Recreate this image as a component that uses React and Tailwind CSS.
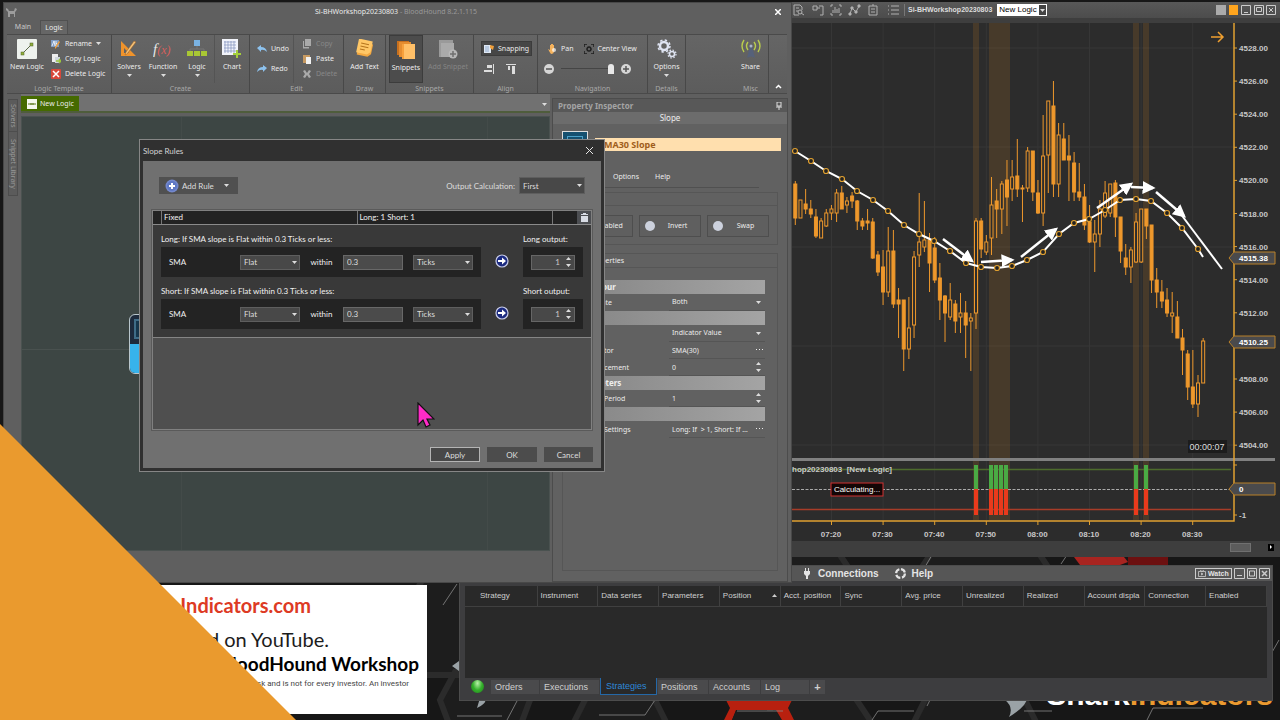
import { useState } from "react";

// one row per minute: high, low, body top, body bottom, hollow
const CANDLES = [
  [181, 225, 184, 218, 0], [200, 218, 200, 218, 1], [189, 214, 204, 209, 0], [200, 218, 209, 214, 0],
  [209, 238, 217, 236, 0], [218, 238, 221, 238, 1], [209, 227, 213, 226, 1], [205, 220, 209, 213, 1],
  [189, 222, 193, 213, 1], [186, 209, 193, 209, 0], [197, 213, 201, 205, 1], [192, 208, 196, 201, 0],
  [200, 230, 201, 221, 0], [218, 230, 221, 226, 0], [209, 230, 221, 223, 0], [218, 259, 222, 258, 0],
  [251, 276, 255, 272, 0], [250, 305, 267, 292, 0], [227, 297, 251, 292, 1], [230, 308, 251, 304, 0],
  [288, 338, 300, 304, 0], [300, 371, 300, 349, 0], [297, 359, 328, 349, 1], [251, 338, 257, 325, 1],
  [193, 267, 242, 255, 1], [201, 252, 240, 247, 1], [233, 292, 240, 263, 0], [237, 283, 248, 280, 0],
  [263, 320, 278, 300, 0], [295, 342, 296, 313, 0], [283, 320, 300, 317, 1], [300, 333, 304, 321, 0],
  [293, 333, 313, 317, 1], [301, 358, 313, 325, 0], [313, 371, 318, 321, 1], [218, 329, 221, 313, 1],
  [218, 258, 221, 249, 0], [235, 255, 242, 252, 1], [177, 255, 205, 238, 1], [189, 238, 201, 209, 0],
  [181, 234, 184, 209, 1], [160, 226, 180, 197, 0], [160, 201, 177, 189, 1], [139, 197, 176, 189, 0],
  [185, 222, 188, 189, 0], [147, 192, 151, 188, 1], [151, 201, 151, 192, 0], [180, 214, 193, 213, 0],
  [115, 226, 156, 213, 1], [101, 193, 101, 155, 1], [81, 197, 106, 184, 0], [123, 197, 135, 184, 1],
  [123, 160, 139, 160, 0], [135, 201, 156, 160, 0], [152, 201, 163, 192, 0], [163, 201, 192, 197, 0],
  [184, 230, 197, 225, 0], [205, 243, 222, 242, 0], [220, 272, 234, 242, 1], [200, 247, 209, 234, 1],
  [181, 218, 193, 216, 1], [184, 217, 184, 213, 1], [180, 237, 183, 217, 0], [217, 263, 217, 251, 0],
  [244, 275, 258, 267, 0], [247, 283, 250, 267, 1], [213, 263, 222, 262, 1], [209, 263, 209, 262, 1],
  [209, 239, 209, 226, 0], [225, 293, 225, 280, 0], [268, 308, 280, 292, 0], [280, 308, 292, 301, 0],
  [288, 317, 300, 313, 0], [292, 333, 313, 316, 1], [301, 338, 317, 338, 0], [329, 375, 338, 350, 0],
  [350, 400, 354, 387, 0], [350, 408, 387, 404, 0], [375, 417, 383, 404, 1], [338, 383, 341, 383, 1],
];

const SMA = [
  [795, 151], [811, 161], [826, 171], [842, 179], [857, 191], [873, 200], [888, 211], [904, 225],
  [919, 234], [934, 241], [950, 251], [966, 263], [981, 267], [997, 268], [1012, 266], [1027, 260],
  [1043, 252], [1059, 234], [1074, 223], [1089, 219], [1105, 210], [1120, 200], [1136, 199], [1151, 201],
  [1167, 213], [1182, 228], [1198, 249],
];

const ARROWS = [
  [943, 239, 972, 261], [981, 262, 1012, 260], [1021, 257, 1056, 229],
  [1097, 208, 1131, 184], [1131, 187, 1153, 188], [1156, 192, 1184, 216],
];

const LAST_PRICE = 4510.25;
const PRICES = [4528, 4526, 4524, 4522, 4520, 4518, 4516, 4514, 4512, 4510, 4508, 4506, 4504];
const TIMES = ["07:20", "07:30", "07:40", "07:50", "08:00", "08:10", "08:20", "08:30"];
const SIGNALS = [976, 991, 996, 1001, 1006, 1136, 1146];

const COLUMNS = [
  "Strategy", "Instrument", "Data series", "Parameters", "Position", "Acct. position", "Sync",
  "Avg. price", "Unrealized", "Realized", "Account displa", "Connection", "Enabled",
];

function Caret({ className = "" }) {
  return (
    <svg className={`w-[5px] h-[3px] shrink-0 pointer-events-none ${className}`} viewBox="0 0 5 3" fill="#ddd">
      <path d="M0 0h5L2.5 3z" />
    </svg>
  );
}

function UpDown({ className = "" }) {
  return (
    <svg className={`w-[5px] h-[10px] shrink-0 ${className}`} viewBox="0 0 5 10" fill="#ddd">
      <path d="M0 3h5L2.5 0zM0 7h5L2.5 10z" />
    </svg>
  );
}

/* ---------- ribbon ---------- */

function Group({ label, className, children }) {
  return (
    <section className={`flex flex-col shrink-0 border-r border-[#484848] ${className}`}>
      <div className="flex h-12 shrink-0">{children}</div>
      <div className="text-center text-[#a8a8a8] leading-3">{label}</div>
    </section>
  );
}

function BigButton({ icon, label, caret, className = "" }) {
  return (
    <button type="button" className={`flex flex-col items-center pt-1 h-12 whitespace-nowrap ${className}`}>
      <svg className="w-5 h-5 shrink-0" viewBox="0 0 20 20">{icon}</svg>
      <span className="mt-[3px] leading-[10px]">{label}</span>
      {caret && <Caret className="mt-[2px]" />}
    </button>
  );
}

function SmallButton({ icon, label, caret, className = "" }) {
  return (
    <button type="button" className={`flex items-center gap-1 h-[15px] whitespace-nowrap ${className}`}>
      <svg className="w-[10px] h-[10px] shrink-0" viewBox="0 0 10 10">{icon}</svg>
      {label}
      {caret && <Caret />}
    </button>
  );
}

const icons = {
  newLogic: (
    <>
      <rect width="20" height="20" rx="1" fill="#eef2ee" />
      <path d="M6 14l8-8" stroke="#5c6a4a" strokeWidth="1" />
      <rect x="4" y="13" width="3" height="3" fill="#8fae3a" stroke="#50622a" strokeWidth=".5" />
      <rect x="13" y="4" width="3" height="3" fill="#8fae3a" stroke="#50622a" strokeWidth=".5" />
    </>
  ),
  solvers: (
    <>
      <path d="M2 2v15h15zM5 9l5 5H5z" fill="#f0932b" fillRule="evenodd" />
      <path d="M17 3L8 15l-2 1 1-3L15 2z" fill="#f3c178" stroke="#9b5a1c" strokeWidth=".5" />
    </>
  ),
  logic: (
    <>
      <rect x="7" y="1" width="6" height="6" fill="#7ab2e2" />
      <path d="M10 7v3M3 12v-2h14v2" stroke="#777" fill="none" />
      <path d="M0 12h6v5H0zM7 12h6v5H7zM14 12h6v5h-6z" fill="#a9c734" />
    </>
  ),
  chart: (
    <>
      <rect x="0" y="0" width="16" height="16" fill="#f2f4fb" />
      <path d="M2 3h12M2 6h12M2 9h12M2 12h12M3 2v12M6 2v12M9 2v12M12 2v12" stroke="#8391bb" strokeWidth=".7" />
      <path d="M15 11v8M11 15h8" stroke="#a4cf3c" strokeWidth="2" />
    </>
  ),
  note: (
    <g transform="rotate(12 10 10)">
      <path d="M3 4h14v10l-3 3H3z" fill="#f3a840" />
      <path d="M2 1h14v11l-3 3H2z" fill="#ffc766" />
      <path d="M5 5h8M5 8h8M5 11h5" stroke="#b5741c" />
    </g>
  ),
  snippets: (
    <>
      <path d="M1 1h12v14H1z" fill="#c8701e" />
      <path d="M3 2h12v15H3z" fill="#e58d30" />
      <path d="M6 4h13v15H6z" fill="#ffc068" />
      <path d="M6 4h2v15H6z" fill="#f6a03c" />
    </>
  ),
  addSnippet: (
    <>
      <path d="M1 1h14v17H1z" fill="#9a9a9a" />
      <path d="M3 4h13v14H3z" fill="#aaa" />
      <circle cx="15" cy="15" r="4.500" fill="#b8b8b8" />
      <path d="M15 12v6M12 15h6" stroke="#707070" strokeWidth="1.500" />
    </>
  ),
  options: (
    <>
      <circle cx="7" cy="7" r="4" fill="none" stroke="#dfe4f2" strokeWidth="2.500" />
      <circle cx="7" cy="7" r="6" fill="none" stroke="#dfe4f2" strokeWidth="1.500" strokeDasharray="2.360" />
      <circle cx="15" cy="15" r="2.500" fill="none" stroke="#dfe4f2" strokeWidth="1.500" />
      <circle cx="15" cy="15" r="4" fill="none" stroke="#dfe4f2" strokeWidth="1.200" strokeDasharray="1.570" />
    </>
  ),
  share: (
    <>
      <path d="M6 19q4-3 8 0l-3-12H9z" fill="#56617a" />
      <circle cx="10" cy="7" r="1.500" fill="#aab4c8" />
      <path
        d="M7 3q-3 4 0 8M13 3q3 4 0 8M3 1q-4 6 0 12M17 1q4 6 0 12"
        fill="none"
        stroke="#b9cc4c"
        strokeWidth="1.400"
      />
    </>
  ),
  rename: (
    <>
      <path d="M0 1h8v7H0z" fill="#7f9cc4" />
      <path d="M1 7l2-5 1 5M5 2v5q3-1 0-3" stroke="#fff" fill="none" strokeWidth=".8" />
      <path d="M9 3L5 9 4 10V8l4-6z" fill="#f0a03c" />
    </>
  ),
  copyLogic: (
    <>
      <path d="M1 0h6v8H1z" fill="#eee" />
      <path d="M4 3h5v6H4z" fill="#cfd6dc" />
      <path d="M5 7h5M8 5l2 2-2 2" stroke="#9bc53d" fill="none" strokeWidth="1.500" />
    </>
  ),
  deleteLogic: (
    <>
      <rect width="10" height="10" rx="1" fill="#d9473a" />
      <path d="M2 2l6 6M8 2L2 8" stroke="#fff" strokeWidth="1.500" />
    </>
  ),
  undo: <path d="M0 4l4-3v2q5 0 6 5-3-3-6-2v2z" fill="#8dc2ee" />,
  redo: <path d="M10 4L6 1v2Q1 3 0 8q3-3 6-2v2z" fill="#8dc2ee" />,
  copy: <path d="M3 0h6v7H3zM1 2h1v6h5v1.500H1z" fill="#aaa" />,
  paste: (
    <>
      <path d="M1 1h7v8H1z" fill="#c79a62" />
      <path d="M4 3h5v7H4z" fill="#f3f3f3" />
    </>
  ),
  remove: <path d="M1 2l2-1 2 3 2-3 2 1-2 3 2 3-2 1-2-3-2 3-2-1 2-3z" fill="#aaa" />,
  snapping: (
    <>
      <path d="M0 1h7v8H0z" fill="#dfe8f4" />
      <path d="M2 2v6M4 2v6" stroke="#7f9cc4" strokeWidth=".8" />
      <path d="M6 1l4 1-1 4-3-2z" fill="#f0a03c" />
    </>
  ),
  hand: (
    <>
      <path d="M1 5l2 1V1h1v3-4h1v4-4h1v4-3h1v6q0 3-3 3Q3 9 1 5z" fill="#f5b25c" />
      <circle cx="7" cy="6" r="2" fill="#fff" opacity=".7" />
    </>
  ),
  center: (
    <path
      d="M0 3V0h3M7 0h3v3M10 7v3H7M3 10H0V7M5 3a2 2 0 1 0 .01 0"
      fill="none"
      stroke="#1e1e1e"
      strokeWidth="1.500"
    />
  ),
  zoomOut: (
    <>
      <circle cx="5" cy="5" r="5" fill="#d6d6d6" />
      <path d="M2 5h6" stroke="#555" strokeWidth="1.500" />
    </>
  ),
  zoomIn: (
    <>
      <circle cx="5" cy="5" r="5" fill="#d6d6d6" />
      <path d="M2 5h6M5 2v6" stroke="#555" strokeWidth="1.500" />
    </>
  ),
};

function Ribbon() {
  const [zoom, setZoom] = useState(100);

  return (
    <div className="flex h-[60px] ml-[3px] mr-1 border-y border-[#4a4a4a] bg-linear-to-b from-[#656565] to-[#5c5c5c]">
      <Group label="Logic Template" className="w-[105px]">
        <BigButton icon={icons.newLogic} label="New Logic" className="w-10" />
        <div className="pl-1 pt-[1px]">
          <SmallButton icon={icons.rename} label="Rename" caret />
          <SmallButton icon={icons.copyLogic} label="Copy Logic" />
          <SmallButton icon={icons.deleteLogic} label="Delete Logic" />
        </div>
      </Group>

      <Group label="Create" className="w-[138px]">
        <BigButton icon={icons.solvers} label="Solvers" caret className="w-[34px]" />
        <BigButton
          icon={
            <text y="15" fontSize="15" fontStyle="italic" fontFamily="Liberation Serif" fill="#e8e8e8">
              f<tspan fontSize="12" fill="#d8605c">(x)</tspan>
            </text>
          }
          label="Function"
          caret
          className="w-[34px]"
        />
        <BigButton icon={icons.logic} label="Logic" caret className="w-[34px]" />
        <BigButton icon={icons.chart} label="Chart" className="flex-1 border-l border-[#545454]" />
      </Group>

      <Group label="Edit" className="w-[94px]">
        <div className="w-[44px] pl-[7px] pt-[6px] border-r border-[#545454]">
          <SmallButton icon={icons.undo} label="Undo" />
          <SmallButton icon={icons.redo} label="Redo" className="mt-[5px]" />
        </div>
        <div className="pl-2 pt-[1px]">
          <SmallButton icon={icons.copy} label="Copy" className="text-[#888]" />
          <SmallButton icon={icons.paste} label="Paste" />
          <SmallButton icon={icons.remove} label="Delete" className="text-[#888]" />
        </div>
      </Group>

      <Group label="Draw" className="w-[42px]">
        <BigButton icon={icons.note} label="Add Text" className="flex-1" />
      </Group>

      <Group label="Snippets" className="w-[88px]">
        <BigButton icon={icons.snippets} label="Snippets" className="w-[34px] ml-[3px] bg-[#4c4c4c] border border-[#3c3c3c]" />
        <BigButton icon={icons.addSnippet} label="Add Snippet" className="flex-1 text-[#858585]" />
      </Group>

      <Group label="Align" className="w-16">
        <div className="pl-[7px] pt-[6px]">
          <SmallButton icon={icons.snapping} label="Snapping" className="w-[51px] pl-[2px] bg-[#464646] border border-[#3c3c3c]" />
          <div className="flex gap-3 mt-2 pl-[3px]">
            <button type="button" aria-label="Align right">
              <svg className="w-[10px] h-[10px]" viewBox="0 0 10 10" fill="#ddd">
                <path d="M3 1h5v3H3zM0 6h8v2H0zM9 0h1v10H9z" />
              </svg>
            </button>
            <button type="button" aria-label="Align top">
              <svg className="w-[10px] h-[10px]" viewBox="0 0 10 10" fill="#ddd">
                <path d="M0 0h10v1H0zM2 2h2v4H2zM6 2h3v8H6z" />
              </svg>
            </button>
          </div>
        </div>
      </Group>

      <Group label="Navigation" className="w-[110px]">
        <div className="flex-1 pt-[6px]">
          <div className="flex gap-[10px] pl-[9px]">
            <SmallButton icon={icons.hand} label="Pan" />
            <SmallButton icon={icons.center} label="Center View" />
          </div>
          <div className="flex items-center gap-[7px] mt-[5px] pl-[6px]">
            <button type="button" aria-label="Zoom out">
              <svg className="w-[10px] h-[10px]" viewBox="0 0 10 10">{icons.zoomOut}</svg>
            </button>
            <input
              type="range"
              aria-label="Zoom"
              value={zoom}
              onChange={(e) => setZoom(e.target.value)}
              className="w-[53px] h-[15px] appearance-none bg-linear-to-b from-transparent from-45% via-[#454545] to-transparent to-55% [&::-webkit-slider-thumb]:appearance-none [&::-webkit-slider-thumb]:w-[6px] [&::-webkit-slider-thumb]:h-[10px] [&::-webkit-slider-thumb]:rounded-t-full [&::-webkit-slider-thumb]:bg-[#e8e8e8]"
            />
            <button type="button" aria-label="Zoom in">
              <svg className="w-[10px] h-[10px]" viewBox="0 0 10 10">{icons.zoomIn}</svg>
            </button>
          </div>
        </div>
      </Group>

      <Group label="Details" className="w-[38px]">
        <BigButton icon={icons.options} label="Options" caret className="flex-1" />
      </Group>

      <Group label="Misc" className="w-9 ml-auto">
        <BigButton icon={icons.share} label="Share" className="flex-1" />
      </Group>
      <button type="button" aria-label="Collapse ribbon" className="w-[18px] flex items-end justify-center pb-1">
        <svg className="w-[7px] h-[5px]" viewBox="0 0 7 5">
          <path d="M1 4l2.500-2.500L6 4" stroke="#fff" strokeWidth="1.500" fill="none" />
        </svg>
      </button>
    </div>
  );
}

/* ---------- property inspector ---------- */

function Toggle({ label }) {
  return (
    <button type="button" className="flex items-center w-[62px] h-[22px] pl-[5px] border border-[#4e4e4e] bg-[#5f5f5f]">
      <span className="w-[10px] h-[10px] rounded-full bg-[#ccd1dd]" />
      <span className="flex-1 text-center">{label}</span>
    </button>
  );
}

function SectionTitle({ children }) {
  return (
    <h3 className="h-[14px] pl-[3px] bg-linear-to-r from-[#858585] to-[#a4a4a4] text-[8px] leading-[14px] font-bold text-[#eee]">
      {children}
    </h3>
  );
}

function Property({ label, value, end }) {
  return (
    <label className="flex items-center h-[17px] pl-3">
      <span className="w-[85px]">{label}</span>
      <span className="relative flex-1 flex items-center border-b border-[#555]">
        {end === "select" ? (
          <select className="w-full h-4 px-[3px] appearance-none">
            <option>{value}</option>
          </select>
        ) : (
          <input className="w-full h-4 pl-[3px] pr-4 text-ellipsis" defaultValue={value} />
        )}
        {end === "select" && <Caret className="absolute right-1" />}
        {end === "spin" && <UpDown className="absolute right-1" />}
        {end === "more" && (
          <svg className="absolute right-[2px] w-[7px] h-[2px]" viewBox="0 0 7 2" fill="#eee">
            <path d="M0 0h1v1H0zM3 0h1v1H3zM6 0h1v1H6z" />
          </svg>
        )}
      </span>
    </label>
  );
}

function PropertyInspector() {
  return (
    <aside className="w-[236px] shrink-0 border border-[#4c4c4c] bg-[#616161] mt-1">
      <header className="flex items-center justify-between h-[13px] px-[5px] bg-[#585858] text-[8px] font-bold text-[#a4a4a4]">
        Property Inspector
        <svg className="w-[6px] h-2" viewBox="0 0 6 8">
          <path d="M1 0h4v4H1zM0 5h6M3 5v3" stroke="#ddd" fill="none" />
        </svg>
      </header>
      <h2 className="h-3 leading-3 text-center text-[8px] bg-[#6c6c6c]">Slope</h2>

      <div className="flex items-center gap-[7px] mt-[7px] mr-[6px] ml-[9px]">
        <div className="w-[26px] h-[26px] border border-[#ddd] bg-[#155070] p-1 shrink-0">
          <div className="h-full border border-[#4aa0c8]" />
        </div>
        <input
          aria-label="Name"
          defaultValue="SMA30 Slope"
          className="flex-1 min-w-0 h-[13px] pl-1 bg-[#ffdfae] text-[#a05e1c] text-[9px] font-bold"
        />
      </div>

      <nav className="flex gap-4 mt-[14px] ml-[10px] mr-7 pb-1 border-b border-[#505050] leading-3">
        <a href="#general" className="w-[34px]">General</a>
        <a href="#options">Options</a>
        <a href="#help">Help</a>
      </nav>

      <section className="mt-1 mx-[9px] h-[53px] border border-[#565656]">
        <div className="h-[13px] border-b border-[#565656] pl-1 leading-3">Output</div>
        <div className="flex gap-[6px] mt-[9px] pl-[8px]">
          <Toggle label="Enabled" />
          <Toggle label="Invert" />
          <Toggle label="Swap" />
        </div>
      </section>

      <section className="mt-2 mx-[9px] h-[318px] border border-[#565656]">
        <div className="h-[14px] border-b border-[#565656] pl-[27px] leading-[13px]">Properties</div>
        <div className="mt-3 ml-[9px] mr-3">
          <SectionTitle>Behaviour</SectionTitle>
          <Property label="Evaluate" value="Both" end="select" />
          <SectionTitle>Input</SectionTitle>
          <Property label="Type" value="Indicator Value" end="select" />
          <Property label="Indicator" value="SMA(30)" end="more" />
          <Property label="Displacement" value="0" end="spin" />
          <SectionTitle>Parameters</SectionTitle>
          <Property label="Slope Period" value="1" end="spin" />
          <SectionTitle>Rules</SectionTitle>
          <Property label="Slope Settings" value="Long: If  > 1, Short: If > 1" end="more" />
        </div>
      </section>
    </aside>
  );
}

/* ---------- BloodHound window ---------- */

function BloodHound() {
  return (
    <div className="absolute left-[3px] top-[2px] w-[789px] h-[581px] flex flex-col bg-[#5f5f5f] border border-[#484848] text-[7px] leading-[10px] text-[#ececec]">
      <header className="flex items-center h-[17px] pl-[2px] pr-[10px]">
        <svg className="w-[11px] h-[10px]" viewBox="0 0 11 10" fill="#9c9c9c">
          <path d="M0 1l2 1 1 2h5l1-3 2 1-1 2-1 1v5H8V7H4v3H2V5L0 3z" />
        </svg>
        <h1 className="flex-1 text-center pt-[1px]">
          Si-BHWorkshop20230803<span className="text-[#999]"> - BloodHound 8.2.1.115</span>
        </h1>
        <button type="button" aria-label="Close BloodHound">
          <svg className="w-[6px] h-[6px]" viewBox="0 0 6 6">
            <path d="M0 0l6 6M6 0L0 6" stroke="#fff" strokeWidth="1.500" />
          </svg>
        </button>
      </header>

      <nav className="flex h-[14px] pl-[2px] leading-[14px]">
        <a href="#main" className="w-[34px] text-center text-[#c8c8c8]">Main</a>
        <a href="#logic" className="w-[28px] text-center border border-b-0 border-[#505050] bg-[#666]">Logic</a>
      </nav>

      <Ribbon />

      <div className="flex flex-1 min-h-0 pl-1 pr-[3px]">
        <div className="w-[10px] h-[97px] mt-[5px] mr-[3px] flex flex-col border border-[#4d4d4d] bg-[#5b5b5b] text-[#999]">
          <button type="button" className="[writing-mode:vertical-rl] h-8 leading-[8px] border-b border-[#4d4d4d]">Solvers</button>
          <button type="button" className="[writing-mode:vertical-rl] flex-1 leading-[8px]">Snippet Library</button>
        </div>

        <main className="flex-1 min-w-0 flex flex-col mr-[2px]">
          <div className="flex items-end justify-between h-[19px] bg-[#717171] border-b-2 border-[#4f5d3c]">
            <button type="button" className="flex items-center gap-[3px] h-[15px] w-[58px] pl-[6px] bg-[#456a00]">
              <svg className="w-[10px] h-[10px]" viewBox="0 0 10 10">
                <rect width="10" height="10" fill="#f4f7ee" />
                <path d="M1 5h8M4 4v2M6 4v2" stroke="#5c7a1c" fill="none" />
              </svg>
              New Logic
            </button>
            <Caret className="mb-[5px] mr-[3px]" />
          </div>
          <div className="relative mt-[3px] h-[435px] bg-[#3d4644] border border-[#4a5250]">
            <div className="absolute inset-x-0 top-[232px] h-px bg-[#49514f]" />
            <div className="absolute inset-y-0 left-[159px] w-px bg-[#434b49]" />
            <div className="absolute inset-y-0 left-[465px] w-px bg-[#434b49]" />
            {/* solver node */}
            <div className="absolute left-[107px] top-[197px] w-[60px] h-[60px] rounded-md border border-[#b9c6cc] overflow-hidden bg-[#1d2a3c]">
              <div className="ml-1 mt-1 w-6 h-5 border-2 border-[#3f6c87] bg-[#16364c]" />
              <div className="mt-[5px] h-[29px] bg-[#37b3ec]" />
            </div>
          </div>
        </main>

        <PropertyInspector />
      </div>
    </div>
  );
}

/* ---------- slope rules dialog ---------- */

function Select({ value, label, className = "" }) {
  return (
    <span className={`relative flex items-center ${className}`}>
      <select aria-label={label} className="w-full h-full pl-[3px] appearance-none bg-[#484848] border border-[#5e5e5e] text-[#ddd]">
        <option>{value}</option>
      </select>
      <Caret className="absolute right-[3px]" />
    </span>
  );
}

function Rule({ side }) {
  return (
    <div className="flex">
      <div className="w-80">
        <div className="h-[15px] leading-[14px]">{side}: If SMA slope is Flat within 0.3 Ticks or less:</div>
        <div className="flex items-center h-[30px] pl-2 pr-2 bg-[#232323]">
          <span className="w-[71px]">SMA</span>
          <Select value="Flat" label={`${side} direction`} className="w-[60px] h-[15px]" />
          <span className="w-[43px] text-center">within</span>
          <input aria-label={`${side} distance`} defaultValue="0.3" className="w-[60px] h-[15px] pl-[3px] bg-[#4b4b4b] border border-[#686868] text-[#ddd]" />
          <Select value="Ticks" label={`${side} unit`} className="ml-auto w-[60px] h-[15px]" />
        </div>
      </div>
      <svg className="w-[14px] h-[14px] mt-[22px] mx-[14px]" viewBox="0 0 14 14">
        <circle cx="7" cy="7" r="6" fill="#1b2a80" stroke="#c8cce8" strokeWidth="1.200" />
        <path d="M3 6h4V3.500L11 7l-4 3.500V8H3z" fill="#fff" />
      </svg>
      <label className="w-[60px]">
        <span className="block h-[15px] leading-[14px]">{side} output:</span>
        <span className="flex items-center h-[30px] px-2 bg-[#232323]">
          <span className="relative flex items-center w-full">
            <input defaultValue="1" className="w-full h-[15px] pr-[14px] text-right bg-[#484848] border border-[#666] text-[#ccc]" />
            <UpDown className="absolute right-1" />
          </span>
        </span>
      </label>
    </div>
  );
}

function SlopeRules() {
  return (
    <div
      role="dialog"
      aria-label="Slope Rules"
      className="absolute left-[139px] top-[139px] w-[466px] h-[333px] flex flex-col p-[3px] pt-0 border border-[#868686] bg-[#303030] font-[Lato,sans-serif] text-[8px] leading-[10px] text-[#f0f0f0]"
    >
      <header className="flex items-center justify-between h-[21px] pr-2">
        <h2 className="text-[#d4d4d4]">Slope Rules</h2>
        <button type="button" aria-label="Close Slope Rules">
          <svg className="w-[7px] h-[7px]" viewBox="0 0 7 7">
            <path d="M0 0l7 7M7 0L0 7" stroke="#e8e8e8" strokeWidth="1" />
          </svg>
        </button>
      </header>

      <div className="flex-1 flex flex-col bg-[#707070] px-2 pb-[6px]">
        <div className="flex items-center justify-between h-[17px] mt-4 ml-2 mr-2">
          <button type="button" className="flex items-center w-[79px] h-[17px] px-[6px] bg-[#505050] text-[#ddd]">
            <svg className="w-[14px] h-[14px]" viewBox="0 0 14 14">
              <circle cx="7" cy="7" r="6.500" fill="#7488cc" />
              <circle cx="7" cy="7" r="5" fill="#5f78c4" />
              <path d="M7 4v6M4 7h6" stroke="#fff" strokeWidth="2" />
            </svg>
            <span className="ml-[3px]">Add Rule</span>
            <Caret className="ml-auto mr-[3px]" />
          </button>
          <div className="flex items-center gap-1">
            <span className="text-[#ddd]">Output Calculation:</span>
            <Select value="First" label="Output Calculation" className="w-[66px] h-[17px]" />
          </div>
        </div>

        <div className="mt-[15px] h-[222px] border border-[#5a5a5a] outline-1 -outline-offset-2 outline-[#808080] p-px bg-[#4f4f4f]">
          <div className="flex h-[14px] leading-3 bg-[#222] border-b border-[#8a8a8a]">
            <div className="w-[9px] border-r border-[#777]" />
            <div className="flex-1 pl-[2px] border-r border-[#777]">Fixed</div>
            <div className="flex-1 pl-[2px] border-r border-[#777]">Long: 1 Short: 1</div>
            <div className="w-6" />
            <button type="button" aria-label="Delete rule" className="w-[14px] flex justify-center items-center bg-[#4c4e52]">
              <svg className="w-[7px] h-[9px]" viewBox="0 0 7 9" fill="#d8dce4">
                <path d="M2 0h3v1h2v1H0V1h2zM0 3h7v6H0z" />
              </svg>
            </button>
          </div>
          <div className="h-[113px] pl-2 pt-[7px] flex flex-col gap-[7px] bg-[#393939] border-b border-[#858585]">
            <Rule side="Long" />
            <Rule side="Short" />
          </div>
        </div>

        <div className="flex justify-end gap-[7px] mt-auto text-[#ddd]">
          <button type="button" className="w-[50px] h-[15px] bg-[#484848] border border-[#b4b4b4]">Apply</button>
          <button type="button" className="w-[50px] h-[15px] bg-[#4c4c4c]">OK</button>
          <button type="button" className="w-[49px] h-[15px] bg-[#4c4c4c]">Cancel</button>
        </div>
      </div>
    </div>
  );
}

/* ---------- chart window ---------- */

function PriceTag({ y, text }) {
  return (
    <g>
      <path d={`M1229 ${y}l5-6h41v12h-41z`} fill="#4a4a4c" stroke="#b98029" />
      <text x="1239" y={y + 3} fill="#fff">{text}</text>
    </g>
  );
}

function PriceChart() {
  const line = SMA.concat([[1203, 257]]).map((p) => p.join(",")).join(" ");

  return (
    <svg
      className="block w-full bg-[#2c2c2c]"
      viewBox="792 23 488 518"
      fontFamily="Liberation Sans"
      fontSize="8"
      fontWeight="bold"
      fill="#c8c8c8"
    >
      <defs>
        <marker id="head" viewBox="0 0 10 10" refX="8" refY="5" markerWidth="13" markerHeight="13" markerUnits="userSpaceOnUse" orient="auto">
          <path d="M0 0l10 5-10 5z" fill="#fff" />
        </marker>
      </defs>

      {TIMES.map((t, i) => (
        <path key={t} d={`M${831.5 + i * 51.6} 23v497`} stroke="#363636" />
      ))}
      {[48, 147, 247, 346, 445].map((y) => (
        <path key={y} d={`M792 ${y}h441`} stroke="#363636" />
      ))}
      <path d="M973 23h6v497h-6zM989 23h21v497h-21zM1133 23h6v497h-6zM1143 23h6v497h-6z" fill="#ff9a1e" opacity=".13" />

      {CANDLES.map(([high, low, top, bottom, hollow], i) => {
        const x = 795.3 + i * 5.163;
        return (
          <g key={i} stroke="#ee982c">
            <path d={`M${x} ${high}V${top}M${x} ${bottom}V${low}`} />
            <rect x={x - 1.5} y={top} width="3" height={bottom - top} fill={hollow ? "#2c2c2c" : "#ee982c"} />
          </g>
        );
      })}

      <polyline points={line} fill="none" stroke="#fff" strokeWidth="2" />
      {SMA.map(([x, y]) => (
        <circle key={x} cx={x} cy={y} r="2.500" fill="#222" stroke="#e0a030" strokeWidth="1.200" />
      ))}
      {ARROWS.map(([x1, y1, x2, y2]) => (
        <line key={x1} x1={x1} y1={y1} x2={x2} y2={y2} stroke="#fff" strokeWidth="2.500" markerEnd="url(#head)" />
      ))}
      <path d="M1180 213l42 56" stroke="#fff" strokeWidth="2" />
      <path d="M1211 37h11M1218 32l5 5-5 5" stroke="#f0a030" strokeWidth="1.500" fill="none" />

      {/* signal panel */}
      <path d="M792 459.500h483" stroke="#808080" strokeWidth="3" />
      <path d="M792 469.500h439" stroke="#4d6b2c" strokeWidth="1.500" />
      <path d="M792 509.500h439" stroke="#a83c28" strokeWidth="1.500" />
      <path d="M792 489.500h439" stroke="#aaa" strokeDasharray="3 1.500" />
      {SIGNALS.map((x) => (
        <g key={x}>
          <rect x={x - 2} y="465" width="4" height="24" fill="#4aaa44" />
          <rect x={x - 2} y="489" width="4" height="26" fill="#ea3a1c" />
        </g>
      ))}
      <text x="792" y="472">hop20230803&#160; [New Logic]</text>
      <rect x="831" y="483" width="52" height="13" fill="#140606" stroke="#d03030" />
      <text x="857" y="492" textAnchor="middle" fontWeight="normal" fill="#fff">Calculating...</text>
      <rect x="1188" y="440" width="39" height="13" fill="#1c1c1c" />
      <text x="1207" y="450" textAnchor="middle" fontWeight="normal" fontSize="9" fill="#ddd">00:00:07</text>

      {/* axes */}
      <path d="M792 521h442V23" stroke="#e0a030" strokeWidth="1.500" fill="none" />
      {PRICES.map((p, i) => (
        <g key={p}>
          <path d={`M1234 ${48 + i * 33.1}h3`} stroke="#e0a030" />
          {/* no label where the last price tag sits */}
          {Math.abs(p - LAST_PRICE) > 0.5 && <text x="1239" y={51 + i * 33.1}>{p}.00</text>}
        </g>
      ))}
      <path d="M1234 465h3M1234 515h3" stroke="#e0a030" />
      <text x="1239" y="518">-1</text>
      {TIMES.map((t, i) => (
        <g key={t}>
          <path d={`M${831.5 + i * 51.6} 521v4`} stroke="#e0a030" />
          <text x={831 + i * 51.6} y="537" textAnchor="middle">{t}</text>
        </g>
      ))}
      <PriceTag y={258} text="4515.38" />
      <PriceTag y={342} text={LAST_PRICE.toFixed(2)} />
      <PriceTag y={489} text="0" />
    </svg>
  );
}

function ChartWindow() {
  return (
    <div className="absolute left-[789px] right-0 top-[2px] pl-[3px] bg-[#3e3e3e] font-['Liberation_Sans',sans-serif]">
      <header className="flex items-center h-4 pl-[1px] pr-1 bg-linear-to-b from-[#585858] to-[#4c4c4c]">
        <svg className="w-[108px] h-3 shrink-0" viewBox="0 0 108 12" fill="none" stroke="#b0b0b0">
          <path d="M1 1h6l2 2v3M1 1v10h5M3 4h3M3 7h2M8 9l3 2M5 8a2 2 0 1 0 4 0 2 2 0 1 0-4 0" />
          <path d="M20 2h4v4h-4zM26 2h4v9h-3M24 4h3" />
          <path d="M38 3V1h2M46 1h2v2M38 9v2h2M46 11h2V9M40 9V6M42 9V3M44 9V5M46 9V4" />
          <path d="M57 10l2-6 4 4 3-6" />
          <path d="M56 9h2v2h-2zM58 3h2v2h-2zM62 7h2v2h-2zM65 1h2v2h-2z" fill="#b0b0b0" />
          <path d="M76 2h8v9h-8zM78 5h4M78 8h4M79 1h2" />
          <path d="M95 2h1M95 6h1M95 10h1M98 2h8M98 6h8M98 10h8" />
        </svg>
        <span className="ml-[3px] pl-[3px] border-l border-[#777] text-[7px] leading-3 font-bold text-[#ddd]">
          Si-BHWorkshop20230803
        </span>
        <span className="relative flex items-center ml-[5px]">
          <select aria-label="Logic" className="w-[50px] h-3 pl-[2px] appearance-none bg-white text-[8px] leading-3 text-black">
            <option>New Logic</option>
          </select>
          <span className="absolute right-[1px] w-[7px] h-[10px] bg-[#444] flex items-center justify-center pointer-events-none">
            <Caret />
          </span>
        </span>
        <svg className="w-[60px] h-[10px] ml-auto shrink-0" viewBox="0 0 60 10" fill="none" stroke="#ccc">
          <path d="M0 0h10v10H0z" fill="#aaa" stroke="none" />
          <path d="M13 0h9v10h-9z" fill="#ffa51e" stroke="none" />
          <path d="M25.500.500h9v9h-9zM28 7.500h4M38.500.500h9v9h-9zM40.500 2.500h5v4h-5zM50.500.500h9v9h-9zM53 3l4 4M57 3l-4 4" />
        </svg>
      </header>
      <div className="pt-[5px]">
        <PriceChart />
      </div>
      <div className="flex items-center h-3 mb-1 mr-[6px]">
        <div className="ml-auto w-[21px] h-[9px] bg-[#5c5c5c] border border-[#707070]" />
        <div className="ml-[17px] w-[6px] h-[7px] bg-black flex items-center justify-center">
          <svg className="w-[2px] h-[4px]" viewBox="0 0 2 4" fill="#fff">
            <path d="M0 0l2 2-2 2z" />
          </svg>
        </div>
      </div>
    </div>
  );
}

/* ---------- control center ---------- */

function ControlCenter() {
  return (
    <div className="absolute left-[459px] right-[7px] top-[565px] border border-[#4c4c4c] bg-[#3d3d3f] font-['Liberation_Sans',sans-serif] text-[#cfcfcf]">
      <header className="flex items-center h-[15px] pl-[343px] pr-[2px] bg-[#565656] text-[10px] leading-[15px] font-bold text-[#e4e4e4]">
        <a href="#connections" className="flex items-center gap-[7px]">
          <svg className="w-2 h-[11px]" viewBox="0 0 8 11" fill="#e4e4e4">
            <path d="M2 0h1v3h2V0h1v3h1v3L5 8v3H3V8L1 6V3h1z" />
          </svg>
          Connections
        </a>
        <a href="#help-center" className="flex items-center gap-[6px] ml-4">
          <svg className="w-[11px] h-[11px]" viewBox="0 0 10 10">
            <circle cx="5" cy="5" r="4" fill="none" stroke="#e4e4e4" strokeWidth="2" strokeDasharray="4.700 1.583" />
          </svg>
          Help
        </a>
        <button type="button" className="ml-auto flex items-center gap-[2px] w-[37px] h-[11px] pl-[2px] border border-[#ccc] text-[7px] leading-[9px]">
          <svg className="w-2 h-[7px]" viewBox="0 0 8 7" fill="none" stroke="#ccc">
            <path d="M.500 1.500h7v5h-7zM2 0l2 1.500L6 0M3.500 3v2l1.500-1z" strokeWidth=".8" />
          </svg>
          Watch
        </button>
        <svg className="w-9 h-[11px] ml-[2px]" viewBox="0 0 36 11" fill="none" stroke="#ccc">
          <path d="M.500.500h10v10H.500zM3 7.500h5M13.500.500h9v10h-9zM15.500 3h5v5h-5zM25.500.500h10v10h-10z" />
          <path d="M28 3l5 5M33 3l-5 5" strokeWidth="1.500" />
        </svg>
      </header>

      <div className="mt-[5px] mx-[5px] h-[92px] bg-[#292929]">
        <table className="w-full table-fixed text-[8px] leading-[10px]">
          <thead>
            <tr className="h-5 border-b border-[#404040]">
              {COLUMNS.map((name) => (
                <th
                  key={name}
                  className="relative pl-[3px] font-normal text-left whitespace-nowrap border-r border-[#404040] first:w-[72px] first:pl-[15px]"
                >
                  {name}
                  {name === "Position" && (
                    <svg className="absolute right-[3px] top-2 w-[5px] h-[3px]" viewBox="0 0 5 3" fill="#ccc">
                      <path d="M0 3h5L2.500 0z" />
                    </svg>
                  )}
                </th>
              ))}
            </tr>
          </thead>
          <tbody />
        </table>
      </div>

      <nav className="flex items-center h-[17px] mb-[5px] pl-[11px] gap-px text-[9px] leading-[14px]">
        <span className="w-[13px] h-[13px] rounded-full bg-radial-[at_50%_25%] from-[#b8f0a8] via-[#35b02c] to-[#1c8018]" />
        <a href="#orders" className="w-12 ml-[6px] pl-1 bg-[#4a4a4c]">Orders</a>
        <a href="#executions" className="w-[59px] pl-1 bg-[#4a4a4c]">Executions</a>
        <a href="#strategies" className="w-[57px] h-[17px] leading-4 pl-[5px] bg-[#292929] border border-t-0 border-[#2468a8] text-[#2e88d8]">Strategies</a>
        <a href="#positions" className="w-[50px] pl-[3px] bg-[#4a4a4c]">Positions</a>
        <a href="#accounts" className="w-[51px] pl-1 bg-[#4a4a4c]">Accounts</a>
        <a href="#log" className="w-12 pl-1 bg-[#4a4a4c]">Log</a>
        <button type="button" className="w-[15px] bg-[#4a4a4c] font-bold text-[11px] leading-[14px]">+</button>
      </nav>
    </div>
  );
}

/* ---------- desktop ---------- */

function Wallpaper() {
  return (
    <svg className="absolute inset-0 w-full h-full" viewBox="0 0 1280 720" preserveAspectRatio="none">
      <rect width="1280" height="720" fill="#171717" />
      <g fill="#1d1d1d" stroke="#2b2b2b" strokeWidth="6">
        <path d="M400 620l25-45h50l30 45-30 55h-50zM440 700l15-28h60l15 28-15 40h-60zM590 690h60l20 40-20 40h-60l-20-40zM770 690h80l20 30-20 40h-80zM930 690h90l20 40h-130z" />
        <path d="M740 540h90l20 30H720zM940 540h90l20 30H920z" />
      </g>
      <path d="M725 698h68l-5 10 6 12h-12l-6-10h-40l-4 10h-8l6-12z" fill="#b8200f" />
      <path d="M736 711h40l5 9h-49z" fill="#1d1d1d" />
      <path d="M1074 557h50l4 5-8 3h-40z" fill="#a82420" />
      <path d="M1128 557h40v8h-40z" fill="#6c1010" />
      <g fill="none" stroke="#8a8a8a">
        <path d="M457 584l-14 21M517 701l-10 19M457 716h45M655 700l-10 15h-46M737 711h46M932 555l-7 12M872 720l6-9h36M930 700l-3 6M1147 720l6-12h50M1067 555l-6 9M1024 711h28M1279 640l-8 14" strokeWidth=".8" />
      </g>
      <path d="M1005 700h22l-3 5q-5 6-15 12 5-10-4-17zM452 666l7-5v10zM484 698q5 4-7 10l3-10z" fill="#9aa2a6" />
    </svg>
  );
}

function Slide() {
  return (
    <div className="absolute left-[100px] top-[585px] w-[327px] h-[129px] bg-white text-right whitespace-nowrap overflow-hidden font-[Lato,sans-serif]">
      <p className="mt-[7px] mr-[116px] text-[20px] leading-[26px] font-bold text-[#dd3a24]">Indicators.com</p>
      <p className="mt-2 mr-[98px] text-[20px] leading-[26px] text-[#1c1c1c]">d on YouTube.</p>
      <p className="mr-2 text-[19px] leading-6 font-bold text-black">BloodHound Workshop</p>
      <p className="mr-[18px] mt-[2px] text-[8px] leading-3 text-[#444] font-[Roboto,sans-serif]">
        risk and is not for every investor. An investor
      </p>
    </div>
  );
}

function App() {
  return (
    <div className="relative w-full h-screen overflow-hidden bg-[#171717] font-['Noto_Sans',sans-serif]">
      <Wallpaper />
      <div className="absolute right-[7px] bottom-[11px] font-['Liberation_Sans',sans-serif] text-[30px] leading-7 font-bold text-white">
        Shark<span className="text-[#eb9a30]">Indicators</span>
      </div>
      <Slide />
      <ControlCenter />
      <ChartWindow />
      <BloodHound />
      <SlopeRules />
      <div className="absolute left-0 bottom-0 w-[296px] h-[296px] bg-[#ea9a2e] [clip-path:polygon(0_0,100%_100%,0_100%)]" />
      <svg className="absolute left-[417px] top-[402px] w-[18px] h-[26px]" viewBox="0 0 18 26">
        <path d="M1 1v22l5-5 3 7 4-2-3-6h7z" fill="#ff2bc8" stroke="#111" strokeWidth="1.200" />
      </svg>
    </div>
  );
}

export default App;
